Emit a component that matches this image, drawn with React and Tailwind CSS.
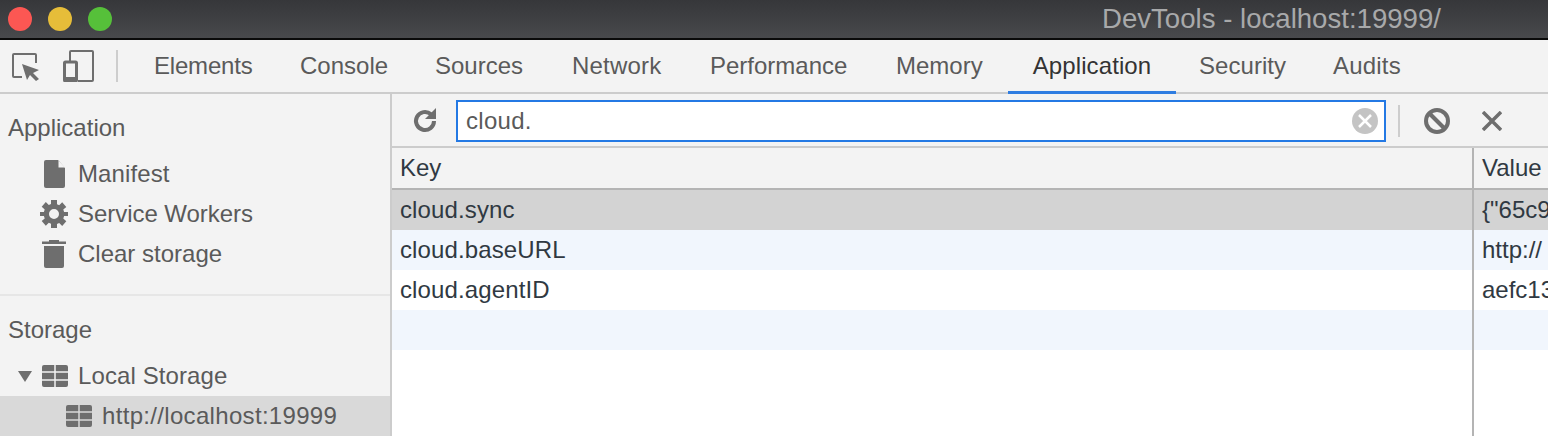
import React from 'react';

const tabs = [
  ['Elements', 'w-[96px] ml-[154px] tracking-[-0.2px]'],
  ['Console', 'w-[88px] ml-[50px]'],
  ['Sources', 'w-[88px] ml-[47px]'],
  ['Network', 'w-[90px] ml-[49px] tracking-[0.2px]'],
  ['Performance', 'w-[137px] ml-[48px]'],
  ['Memory', 'w-[87px] ml-[49px]'],
];

function FileIcon() {
  return (
    <svg width="22" height="28" viewBox="0 0 22 28" className="shrink-0">
      <path d="M2 0h12l7 8v18a2 2 0 0 1-2 2H2a2 2 0 0 1-2-2V2a2 2 0 0 1 2-2z" fill="#6e6e6e" />
      <path d="M14.5 0.5l6.5 7h-6.5z" fill="#f3f3f3" />
    </svg>
  );
}

function GearIcon() {
  return (
    <svg width="28" height="28" viewBox="0 0 28 28" className="shrink-0">
      <path
        fillRule="evenodd"
        fill="#6e6e6e"
        d="M11 0h6v4.2l2.2 1 3-3 4.1 4.7-3 2.7.8 2.4H28v4h-3.900l-.8 2.600 3 2.700-4.100 4.700-3-3-2.200 1V28h-6v-4.200l-2.200-1-3 3-4.100-4.700 3-2.700-.8-2.400H0v-4h3.900l.8-2.600-3-2.700 4.100-4.700 3 3 2.200-1V0zM14 9a5 5 0 1 0 0 10 5 5 0 0 0 0-10z"
      />
    </svg>
  );
}

function TrashIcon() {
  return (
    <svg width="24" height="28" viewBox="0 0 24 28" className="shrink-0">
      <path d="M7 0h10v1.500h7V4H0V1.500h7z" fill="#6e6e6e" />
      <path d="M2 6h20v20a2 2 0 0 1-2 2H4a2 2 0 0 1-2-2z" fill="#6e6e6e" />
    </svg>
  );
}

function GridIcon() {
  return (
    <svg width="26" height="22" viewBox="0 0 26 22" className="shrink-0">
      <path d="M2 0h10.250v6.300H0V2a2 2 0 0 1 2-2zM13.750 0H24a2 2 0 0 1 2 2v4.300H13.750zM0 7.800h12.250v6.400H0zM13.750 7.800H26v6.400H13.750zM0 15.700h12.250V22H2a2 2 0 0 1-2-2zM13.750 15.700H26V20a2 2 0 0 1-2 2H13.750z" fill="#6e6e6e" />
    </svg>
  );
}

function Row({ label, value, className }) {
  return (
    <div className={`flex h-[40px] items-center ${className}`}>
      <div className="w-[1080px] shrink-0 pl-[8px] tracking-[0.12px] text-[#303942]">{label}</div>
      <div className="h-full w-[2px] shrink-0 bg-[#b4b4b4]" />
      <div className="whitespace-nowrap pl-[8px] text-[#303942]">{value}</div>
    </div>
  );
}

export default function App() {
  return (
    <div className="flex h-[436px] w-[1548px] flex-col overflow-hidden bg-white font-['Liberation_Sans',sans-serif] text-[24px] leading-none text-[#5a5a5a]">
      <div className="flex h-[40px] shrink-0 items-center border-b-2 border-[#0a0a0a] bg-gradient-to-b from-[#36373a] to-[#48494c]">
        <div className="ml-[8px] h-[24px] w-[24px] rounded-full bg-[#fc5753]" />
        <div className="ml-[16px] h-[24px] w-[24px] rounded-full bg-[#e6bd39]" />
        <div className="ml-[16px] h-[24px] w-[24px] rounded-full bg-[#56c03a]" />
        <div className="ml-[990px] whitespace-nowrap text-[27.6px] text-[#a8a9aa]">DevTools - localhost:19999/</div>
      </div>

      <div className="relative flex h-[54px] shrink-0 items-center border-b-2 border-[#cccccc] bg-[#f3f3f3]">
        <svg width="28" height="28" viewBox="0 0 28 28" className="absolute left-[12px] top-[13px]">
          <path d="M10 24H2a1 1 0 0 1-1-1V2a1 1 0 0 1 1-1h21a1 1 0 0 1 1 1v8" fill="none" stroke="#6e6e6e" strokeWidth="2" />
          <path d="M10 11l17 6-6 3 6 6-3 2-6-6-3 5z" fill="#6e6e6e" />
        </svg>
        <svg width="32" height="32" viewBox="0 0 32 32" className="absolute left-[63px] top-[10px]">
          <path d="M7 11V2a1 1 0 0 1 1-1h21a1 1 0 0 1 1 1v28a1 1 0 0 1-1 1H15" fill="none" stroke="#6e6e6e" strokeWidth="2" />
          <rect x="1.500" y="12" width="12" height="19" rx="1" fill="none" stroke="#6e6e6e" strokeWidth="3" />
          <rect x="1" y="27" width="13" height="5" fill="#6e6e6e" />
        </svg>
        <div className="absolute left-[116px] top-[10px] h-[32px] w-[2px] bg-[#cdcdcd]" />
        {tabs.map(([t, c]) => (
          <div key={t} className={`${c} shrink-0`}>{t}</div>
        ))}
        <div className="-mb-[2px] ml-[25px] flex h-[54px] w-[168px] shrink-0 items-center justify-center self-end border-b-[3px] border-[#2f7de1] pt-[1px] tracking-[0.1px] text-[#333333]">Application</div>
        <div className="ml-[23px] w-[88px] shrink-0 tracking-[0.05px]">Security</div>
        <div className="ml-[46px] shrink-0 tracking-[0.2px]">Audits</div>
      </div>

      <div className="flex min-h-0 flex-1">
        <div className="w-[392px] shrink-0 border-r-2 border-[#cccccc] bg-[#f3f3f3]">
          <div className="flex h-[202px] flex-col border-b-2 border-[#e6e6e6]">
            <div className="ml-[8px] mt-[22px] h-[24px] text-[#5a5a5a]">Application</div>
            <div className="mt-[14px] flex h-[40px] items-center pl-[44px]">
              <FileIcon />
              <span className="ml-[12px] tracking-[0.1px]">Manifest</span>
            </div>
            <div className="flex h-[40px] items-center pl-[40px]">
              <GearIcon />
              <span className="ml-[10px] tracking-[-0.05px]">Service Workers</span>
            </div>
            <div className="flex h-[40px] items-center pl-[42px]">
              <TrashIcon />
              <span className="ml-[12px]">Clear storage</span>
            </div>
          </div>
          <div className="ml-[8px] mt-[22px] h-[24px]">Storage</div>
          <div className="mt-[14px] flex h-[40px] items-center pl-[18px]">
            <div className="h-0 w-0 border-x-[7px] border-t-[11px] border-x-transparent border-t-[#6e6e6e]" />
            <div className="ml-[10px]"><GridIcon /></div>
            <span className="ml-[10px] tracking-[0.1px]">Local Storage</span>
          </div>
          <div className="flex h-[40px] items-center bg-[#d9d9d9] pl-[66px]">
            <GridIcon />
            <span className="ml-[10px] tracking-[0.32px]">http://localhost:19999</span>
          </div>
        </div>

        <div className="min-w-0 flex-1">
          <div className="flex h-[54px] items-center border-b-2 border-[#cccccc] bg-[#f3f3f3] pt-[2px]">
            <svg width="26" height="26" viewBox="0 0 26 26" className="ml-[20px] shrink-0">
              <path d="M22 13a9 9 0 1 1-3-6.700" fill="none" stroke="#6e6e6e" strokeWidth="4" />
              <path d="M24 0v11H13z" fill="#6e6e6e" />
            </svg>
            <div className="ml-[18px] flex h-[42px] w-[930px] shrink-0 items-center border-2 border-[#2479e4] bg-white pl-[8px]">
              <span className="tracking-[0.3px]">cloud.</span>
              <svg width="26" height="26" viewBox="0 0 26 26" className="ml-auto mr-[6px]">
                <circle cx="13" cy="13" r="13" fill="#c4c4c4" />
                <path d="M7 7l12 12M19 7L7 19" stroke="#ffffff" strokeWidth="2.500" />
              </svg>
            </div>
            <div className="ml-[12px] h-[32px] w-[2px] bg-[#cdcdcd]" />
            <svg width="26" height="26" viewBox="0 0 26 26" className="ml-[24px] shrink-0">
              <circle cx="13" cy="13" r="11" fill="none" stroke="#6e6e6e" strokeWidth="4" />
              <path d="M5 5l16 16" stroke="#6e6e6e" strokeWidth="4" />
            </svg>
            <svg width="20" height="20" viewBox="0 0 20 20" className="ml-[32px] shrink-0">
              <path d="M1 1l18 18M19 1L1 19" stroke="#6e6e6e" strokeWidth="3.500" />
            </svg>
          </div>
          <div className="flex h-[42px] items-center border-b-2 border-[#b4b4b4] bg-[#f3f3f3]">
            <div className="w-[1080px] shrink-0 pl-[8px] text-[#303942]">Key</div>
            <div className="h-full w-[2px] shrink-0 bg-[#b4b4b4]" />
            <div className="pl-[8px] text-[#303942]">Value</div>
          </div>
          <Row label="cloud.sync" value='{"65c9' className="bg-[#d3d3d3]" />
          <Row label="cloud.baseURL" value="http://" className="bg-[#f1f6fd]" />
          <Row label="cloud.agentID" value="aefc13" className="bg-white" />
          <Row label="" value="" className="bg-[#f1f6fd]" />
          <Row label="" value="" className="bg-white" />
          <Row label="" value="" className="bg-white" />
          <Row label="" value="" className="bg-white" />
        </div>
      </div>
    </div>
  );
}
